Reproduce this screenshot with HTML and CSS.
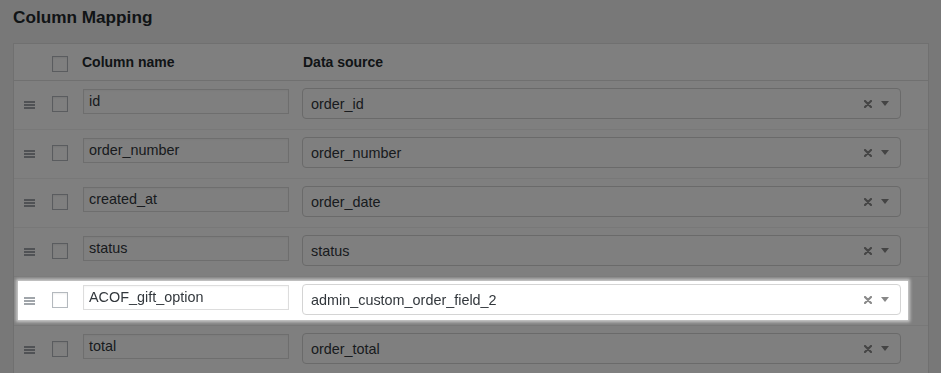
FILE: index.html
```html
<!DOCTYPE html>
<html>
<head>
<meta charset="utf-8">
<link rel="stylesheet" href="styles.css">
</head>
<body>
<div class="wrap">
  <h2 class="title">Column Mapping</h2>
  <div class="table">
    <div class="head">
      <div class="line">
        <span class="handle-slot"></span>
        <span class="cb"></span>
        <span class="col-name">Column name</span>
        <span class="col-src">Data source</span>
      </div>
    </div>

    <div class="row">
      <div class="line">
        <span class="handle"><i></i><i></i><i></i></span>
        <span class="cb"></span>
        <span class="inp">id</span>
        <span class="sel"><span class="sel-text">order_id</span><svg class="clear" width="8" height="8" viewBox="0 0 8 8"><path d="M1 1L7 7M7 1L1 7"/></svg><span class="arrow"><b></b></span></span>
      </div>
    </div>

    <div class="row">
      <div class="line">
        <span class="handle"><i></i><i></i><i></i></span>
        <span class="cb"></span>
        <span class="inp">order_number</span>
        <span class="sel"><span class="sel-text">order_number</span><svg class="clear" width="8" height="8" viewBox="0 0 8 8"><path d="M1 1L7 7M7 1L1 7"/></svg><span class="arrow"><b></b></span></span>
      </div>
    </div>

    <div class="row">
      <div class="line">
        <span class="handle"><i></i><i></i><i></i></span>
        <span class="cb"></span>
        <span class="inp">created_at</span>
        <span class="sel"><span class="sel-text">order_date</span><svg class="clear" width="8" height="8" viewBox="0 0 8 8"><path d="M1 1L7 7M7 1L1 7"/></svg><span class="arrow"><b></b></span></span>
      </div>
    </div>

    <div class="row">
      <div class="line">
        <span class="handle"><i></i><i></i><i></i></span>
        <span class="cb"></span>
        <span class="inp">status</span>
        <span class="sel"><span class="sel-text">status</span><svg class="clear" width="8" height="8" viewBox="0 0 8 8"><path d="M1 1L7 7M7 1L1 7"/></svg><span class="arrow"><b></b></span></span>
      </div>
    </div>

    <div class="row">
      <div class="line highlight">
        <span class="handle"><i></i><i></i><i></i></span>
        <span class="cb"></span>
        <span class="inp">ACOF_gift_option</span>
        <span class="sel"><span class="sel-text">admin_custom_order_field_2</span><svg class="clear" width="8" height="8" viewBox="0 0 8 8"><path d="M1 1L7 7M7 1L1 7"/></svg><span class="arrow"><b></b></span></span>
      </div>
    </div>

    <div class="row">
      <div class="line">
        <span class="handle"><i></i><i></i><i></i></span>
        <span class="cb"></span>
        <span class="inp">total</span>
        <span class="sel"><span class="sel-text">order_total</span><svg class="clear" width="8" height="8" viewBox="0 0 8 8"><path d="M1 1L7 7M7 1L1 7"/></svg><span class="arrow"><b></b></span></span>
      </div>
    </div>
  </div>
</div>
<div class="overlay"></div>
</body>
</html>
```

FILE: styles.css
```css
html, body {
  margin: 0;
  padding: 0;
  background: #f1f1f1;
  font-family: "Liberation Sans", Arial, sans-serif;
  color: #23282d;
  overflow: hidden;
  height: 373px;
}

.wrap {
  padding: 0 12px 0 13px;
}

.title {
  margin: 6px 0 0;
  font-size: 17.2px;
  line-height: 22px;
  font-weight: bold;
  color: #23282d;
}

.table {
  margin-top: 15px;
  background: #fff;
  border: 1px solid #e1e1e1;
  border-bottom: none;
}

.head {
  height: 36px;
  border-bottom: 1px solid #e1e1e1;
  display: flex;
}

.head .line {
  align-items: center;
  padding-top: 0;
  padding-bottom: 0;
  height: 36px;
  margin: 0 20px 0 4px;
}

.row {
  height: 44px;
  padding-top: 4px;
  border-bottom: 1px solid #f1f1f1;
}

.line {
  display: flex;
  align-items: center;
  height: 31px;
  padding: 3px 7px 5px 6px;
  margin: 0 20px 0 4px;
  background: #fff;
}

.handle-slot,
.handle {
  width: 11px;
  flex: none;
  margin-right: 17px;
}

.handle {
  display: flex;
  flex-direction: column;
  gap: 1.5px;
  margin-top: 3px;
}

.handle i {
  display: block;
  height: 1.5px;
  background: #a0a5aa;
}

.cb {
  width: 14px;
  height: 14px;
  flex: none;
  border: 1px solid #b4b9be;
  background: #fff;
  box-shadow: inset 0 1px 2px rgba(0, 0, 0, 0.07);
  margin-right: 15px;
}

.head .cb {
  margin-top: 3px;
}

.col-name {
  width: 221px;
  flex: none;
  font-size: 14px;
  font-weight: bold;
  margin-left: -1px;
}

.col-src {
  font-size: 14px;
  font-weight: bold;
}

.inp {
  width: 199px;
  height: 23px;
  flex: none;
  box-sizing: content-box;
  border: 1px solid #ddd;
  padding-left: 5px;
  font-size: 14.4px;
  line-height: 22px;
  color: #32373c;
  margin-right: 13px;
  align-self: flex-start;
  margin-top: 1px;
  box-shadow: inset 0 1px 2px rgba(0, 0, 0, 0.04);
}

.sel {
  width: 597px;
  height: 29px;
  flex: none;
  border: 1px solid #d4d4d4;
  border-radius: 4px;
  display: flex;
  align-items: center;
  background: #fff;
}

.sel-text {
  flex: 1;
  padding-left: 8px;
  font-size: 14.4px;
  color: #32373c;
  margin-top: 1px;
}

.clear {
  flex: none;
  margin-right: 3px;
  stroke: #8a8a8a;
  stroke-width: 2.2;
  stroke-linecap: round;
  fill: none;
}

.arrow {
  width: 20px;
  display: flex;
  justify-content: center;
  margin-right: 5px;
}

.arrow b {
  width: 0;
  height: 0;
  border-style: solid;
  border-width: 5px 4px 0 4px;
  border-color: #888 transparent transparent transparent;
}

.overlay {
  position: fixed;
  inset: 0;
  background: rgba(0, 0, 0, 0.5);
  z-index: 5;
}

.highlight {
  position: relative;
  z-index: 10;
  box-shadow: 0 0 3px 2px rgba(255, 255, 255, 0.6);
}
```
